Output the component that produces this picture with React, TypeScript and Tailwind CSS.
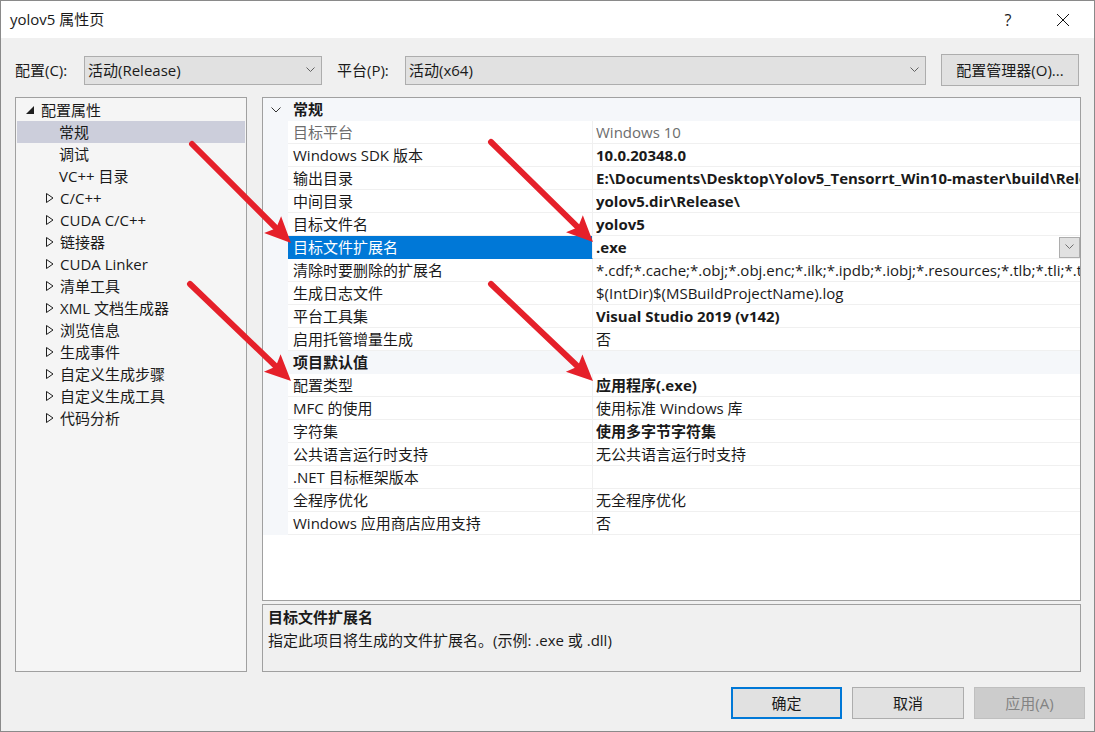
import React from "react";

const FONT = "font-['Open_Sans','Noto_Sans_CJK_SC',sans-serif]";

function Chevron({ color = "#606060", w = 9 }: { color?: string; w?: number }) {
  return (
    <svg width={w} height={Math.ceil(w / 2) + 1} viewBox={`0 0 ${w} ${Math.ceil(w / 2) + 1}`}>
      <path d={`M0.5 0.5 L${w / 2} ${w / 2} L${w - 0.5} 0.5`} fill="none" stroke={color} strokeWidth="1" />
    </svg>
  );
}

function Combo({ text, className }: { text: string; className: string }) {
  return (
    <div className={`h-[29px] border border-[#adadad] bg-[#e1e1e1] flex items-center justify-between pl-[3px] pr-[6px] shrink-0 ${className}`}>
      <span>{text}</span>
      <Chevron />
    </div>
  );
}

type TreeItem = { label: string; kind: "open" | "leaf" | "closed"; selected?: boolean };
const tree: TreeItem[] = [
  { label: "配置属性", kind: "open" },
  { label: "常规", kind: "leaf", selected: true },
  { label: "调试", kind: "leaf" },
  { label: "VC++ 目录", kind: "leaf" },
  { label: "C/C++", kind: "closed" },
  { label: "CUDA C/C++", kind: "closed" },
  { label: "链接器", kind: "closed" },
  { label: "CUDA Linker", kind: "closed" },
  { label: "清单工具", kind: "closed" },
  { label: "XML 文档生成器", kind: "closed" },
  { label: "浏览信息", kind: "closed" },
  { label: "生成事件", kind: "closed" },
  { label: "自定义生成步骤", kind: "closed" },
  { label: "自定义生成工具", kind: "closed" },
  { label: "代码分析", kind: "closed" },
];

type Row =
  | { header: string }
  | { name: string; value: string; bold?: boolean; gray?: boolean; selected?: boolean };

const rows: Row[] = [
  { header: "常规" },
  { name: "目标平台", value: "Windows 10", gray: true },
  { name: "Windows SDK 版本", value: "10.0.20348.0", bold: true },
  { name: "输出目录", value: "E:\\Documents\\Desktop\\Yolov5_Tensorrt_Win10-master\\build\\Release\\", bold: true },
  { name: "中间目录", value: "yolov5.dir\\Release\\", bold: true },
  { name: "目标文件名", value: "yolov5", bold: true },
  { name: "目标文件扩展名", value: ".exe", bold: true, selected: true },
  { name: "清除时要删除的扩展名", value: "*.cdf;*.cache;*.obj;*.obj.enc;*.ilk;*.ipdb;*.iobj;*.resources;*.tlb;*.tli;*.tlh;*.tmp" },
  { name: "生成日志文件", value: "$(IntDir)$(MSBuildProjectName).log" },
  { name: "平台工具集", value: "Visual Studio 2019 (v142)", bold: true },
  { name: "启用托管增量生成", value: "否" },
  { header: "项目默认值" },
  { name: "配置类型", value: "应用程序(.exe)", bold: true },
  { name: "MFC 的使用", value: "使用标准 Windows 库" },
  { name: "字符集", value: "使用多字节字符集", bold: true },
  { name: "公共语言运行时支持", value: "无公共语言运行时支持" },
  { name: ".NET 目标框架版本", value: "" },
  { name: "全程序优化", value: "无全程序优化" },
  { name: "Windows 应用商店应用支持", value: "否" },
];

function Arrow({ x1, y1, x2, y2 }: { x1: number; y1: number; x2: number; y2: number }) {
  const dx = x2 - x1;
  const dy = y2 - y1;
  const L = Math.hypot(dx, dy);
  const ux = dx / L;
  const uy = dy / L;
  const hl = 26;
  const hw = 12;
  const bx = x2 - ux * hl;
  const by = y2 - uy * hl;
  const px = -uy;
  const py = ux;
  const nx = x2 - ux * (hl - 5);
  const ny = y2 - uy * (hl - 5);
  const pts = [
    [x2, y2],
    [bx + px * hw, by + py * hw],
    [nx, ny],
    [bx - px * hw, by - py * hw],
  ]
    .map((p) => p.join(","))
    .join(" ");
  return (
    <g>
      <line x1={x1} y1={y1} x2={nx} y2={ny} stroke="#e5202a" strokeWidth="6" strokeLinecap="round" />
      <polygon points={pts} fill="#e5202a" />
    </g>
  );
}

export default function App() {
  return (
    <div className={`${FONT} relative w-[1095px] h-[732px] bg-[#f0f0f0] text-[15px] text-[#1a1a1a] border border-[#8a8a8a] overflow-hidden flex flex-col`}>
      {/* title bar */}
      <div className="h-[37px] bg-white flex items-center pl-[9px] shrink-0">
        <span className="flex-1">yolov5 属性页</span>
        <span className="w-[20px] text-center mr-[38px] text-[16px]">?</span>
        <svg width="14" height="14" viewBox="0 0 14 14" className="mr-[24px]">
          <path d="M1 1 L13 13 M13 1 L1 13" stroke="#111" strokeWidth="1" />
        </svg>
      </div>

      {/* body */}
      <div className="flex flex-col pl-[14px] pr-[13px] pt-[16px] flex-1 min-w-0">
        {/* config row */}
        <div className="h-[32px] flex items-center">
          <span className="w-[69px] shrink-0">配置(C):</span>
          <Combo text="活动(Release)" className="w-[238px]" />
          <span className="w-[68px] ml-[15px] shrink-0">平台(P):</span>
          <Combo text="活动(x64)" className="w-[521px]" />
          <div className="ml-[15px] w-[138px] h-[32px] border border-[#adadad] bg-[#e1e1e1] flex items-center justify-center shrink-0">
            配置管理器(O)...
          </div>
        </div>

        {/* main */}
        <div className="flex mt-[11px] h-[575px] min-w-0">
          {/* tree */}
          <div className="w-[232px] shrink-0 border border-[#a0a0a0] bg-[#f5f5f5] p-[1px] flex flex-col">
            {tree.map((t) => (
              <div
                key={t.label}
                className={`h-[22px] flex items-center shrink-0 ${t.selected ? "bg-[#cccedb]" : ""}`}
              >
                {t.kind === "open" && (
                  <>
                    <svg width="8" height="8" viewBox="0 0 8 8" className="ml-[9px] mr-[7px]">
                      <polygon points="8,0 8,8 0,8" fill="#1e1e1e" />
                    </svg>
                    <span>{t.label}</span>
                  </>
                )}
                {t.kind === "leaf" && <span className="ml-[42px]">{t.label}</span>}
                {t.kind === "closed" && (
                  <>
                    <svg width="8" height="10" viewBox="0 0 8 10" className="ml-[29px] mr-[6px]">
                      <polygon points="0.5,0.5 7,5 0.5,9.5" fill="none" stroke="#1e1e1e" strokeWidth="1" />
                    </svg>
                    <span>{t.label}</span>
                  </>
                )}
              </div>
            ))}
          </div>

          {/* right column */}
          <div className="ml-[15px] flex-1 min-w-0 flex flex-col">
            <div className="h-[504px] border border-[#a0a0a0] bg-white overflow-hidden">
              <div className="flex flex-col">
                {rows.map((r, i) =>
                  "header" in r ? (
                    <div key={i} className="h-[23px] bg-[#f5f7fa] flex items-center shrink-0">
                      <span className="w-[25px] flex justify-center">
                        <Chevron color="#333" w={10} />
                      </span>
                      <span className="ml-[5px] font-bold">{r.header}</span>
                    </div>
                  ) : (
                    <div key={i} className="h-[23px] flex shrink-0">
                      <div className="w-[25px] shrink-0 bg-[#f5f7fa]" />
                      <div
                        className={`w-[305px] shrink-0 border-r border-b border-[#f0f0f0] flex items-center pl-[5px] whitespace-nowrap overflow-hidden ${
                          r.selected ? "bg-[#0078d7] text-white border-b-[#0078d7]" : r.gray ? "text-[#6d6d6d]" : ""
                        }`}
                      >
                        {r.name}
                      </div>
                      <div
                        className={`flex-1 min-w-0 border-b border-[#f0f0f0] flex items-center pl-[3px] whitespace-nowrap overflow-hidden ${
                          r.bold ? "font-bold" : ""
                        } ${r.gray ? "text-[#6d6d6d]" : ""}`}
                      >
                        <span className="flex-1 min-w-0 overflow-hidden">{r.value}</span>
                        {r.selected && (
                          <div className="w-[21px] h-[21px] shrink-0 border border-[#adadad] bg-[#e1e1e1] flex items-center justify-center">
                            <Chevron color="#707070" w={9} />
                          </div>
                        )}
                      </div>
                    </div>
                  )
                )}
              </div>
            </div>
            <div className="mt-[3px] h-[68px] border border-[#a0a0a0] bg-[#f0f0f0] px-[5px] pt-[1px]">
              <div className="font-bold h-[22px] leading-[22px]">目标文件扩展名</div>
              <div className="h-[24px] leading-[24px]">指定此项目将生成的文件扩展名。(示例: .exe 或 .dll)</div>
            </div>
          </div>
        </div>

        {/* buttons */}
        <div className="flex justify-end mt-[15px] mr-[-4px]">
          <div className="w-[111px] h-[32px] border-2 border-[#0078d7] bg-[#e1e1e1] flex items-center justify-center">
            确定
          </div>
          <div className="ml-[10px] w-[112px] h-[32px] border border-[#adadad] bg-[#e1e1e1] flex items-center justify-center">
            取消
          </div>
          <div className="ml-[10px] w-[111px] h-[32px] border border-[#bfbfbf] bg-[#cccccc] text-[#838383] flex items-center justify-center">
            应用(A)
          </div>
        </div>
      </div>

      {/* annotation arrows */}
      <svg className="absolute left-0 top-0 pointer-events-none" width="1095" height="732">
        <Arrow x1={191} y1={143} x2={290} y2={242} />
        <Arrow x1={490} y1={141} x2={592} y2={241} />
        <Arrow x1={189} y1={283} x2={290} y2={380} />
        <Arrow x1={490} y1={283} x2={592} y2={380} />
      </svg>
    </div>
  );
}
